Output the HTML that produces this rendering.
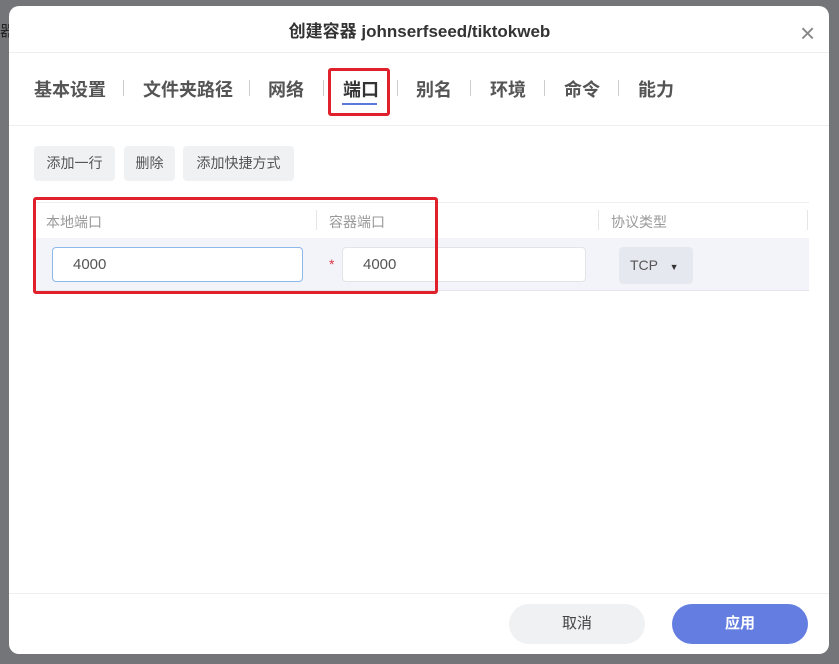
<html><head><style>
*{box-sizing:border-box;margin:0;padding:0}
body{width:839px;height:664px;background:#747578;font-family:"Liberation Sans","Noto Sans CJK SC",sans-serif;position:relative;overflow:hidden}
.a{position:absolute}
.m{left:9px;top:6px;width:820px;height:648px;background:#fff;border-radius:10px}
.t{font-size:17px;color:#333;font-weight:bold}
.tab{top:76px;font-size:18px;font-weight:bold;color:#555}
.sep{top:80px;width:1px;height:16px;background:#ccc}
.btn{top:146px;height:35px;background:#f0f1f2;border-radius:4px;font-size:14px;color:#555;line-height:35px;text-align:center}
.th{top:212px;font-size:14px;color:#999}
.inp{top:247px;height:35px;background:#fff;border:1px solid #e3e4e8;border-radius:4px;font-size:15px;color:#555;line-height:33px;padding-left:20px}
.red{border:3px solid #e0202a;border-radius:3px}
</style></head><body>
<div class="a" style="left:0;top:20px;font-size:15px;color:#222">器</div>
<div class="a m"></div>
<div class="a t" style="left:0;width:839px;text-align:center;top:17px">创建容器 johnserfseed/tiktokweb</div>
<div class="a" style="left:800px;top:18px;font-size:26px;color:#888;line-height:30px">×</div>
<div class="a" style="left:9px;top:52px;width:820px;height:1px;background:#eee"></div>
<div class="a tab" style="left:34px">基本设置</div><div class="a sep" style="left:123px"></div>
<div class="a tab" style="left:143px">文件夹路径</div><div class="a sep" style="left:249px"></div>
<div class="a tab" style="left:268px">网络</div><div class="a sep" style="left:323px"></div>
<div class="a tab" style="left:343px;color:#333">端口</div>
<div class="a" style="left:342px;top:103px;width:35px;height:2px;background:#5a78e0"></div>
<div class="a red" style="left:328px;top:68px;width:62px;height:48px"></div>
<div class="a sep" style="left:397px"></div>
<div class="a tab" style="left:416px">别名</div><div class="a sep" style="left:470px"></div>
<div class="a tab" style="left:490px">环境</div><div class="a sep" style="left:544px"></div>
<div class="a tab" style="left:564px">命令</div><div class="a sep" style="left:618px"></div>
<div class="a tab" style="left:638px">能力</div>
<div class="a" style="left:9px;top:125px;width:820px;height:1px;background:#eee"></div>
<div class="a btn" style="left:34px;width:81px">添加一行</div>
<div class="a btn" style="left:124px;width:51px">删除</div>
<div class="a btn" style="left:183px;width:111px">添加快捷方式</div>
<div class="a" style="left:36px;top:202px;width:773px;height:1px;background:#eee"></div>
<div class="a th" style="left:46px">本地端口</div>
<div class="a th" style="left:329px">容器端口</div>
<div class="a th" style="left:611px">协议类型</div>
<div class="a" style="left:316px;top:210px;width:1px;height:20px;background:#e6e6e6"></div>
<div class="a" style="left:598px;top:210px;width:1px;height:20px;background:#e6e6e6"></div>
<div class="a" style="left:807px;top:210px;width:1px;height:20px;background:#e6e6e6"></div>
<div class="a" style="left:36px;top:238px;width:773px;height:53px;background:#f3f4f9;border-bottom:1px solid #e6e6ea"></div>
<div class="a inp" style="left:52px;width:251px;border-color:#8cb8ec">4000</div>
<div class="a" style="left:329px;top:256px;color:#d9364a;font-size:14px">*</div>
<div class="a inp" style="left:342px;width:244px">4000</div>
<div class="a" style="left:619px;top:247px;width:74px;height:37px;background:#e6e8ef;border-radius:4px;font-size:14px;color:#555;line-height:37px;padding-left:11px">TCP <span style="font-size:9px;margin-left:8px;color:#333">▼</span></div>
<div class="a red" style="left:33px;top:197px;width:405px;height:97px"></div>
<div class="a" style="left:9px;top:593px;width:820px;height:1px;background:#eee"></div>
<div class="a" style="left:509px;top:604px;width:136px;height:40px;border-radius:20px;background:#f0f1f2;color:#444;font-size:15px;text-align:center;line-height:40px">取消</div>
<div class="a" style="left:672px;top:604px;width:136px;height:40px;border-radius:20px;background:#637de0;color:#fff;font-size:15px;font-weight:bold;text-align:center;line-height:40px">应用</div>
</body></html>
